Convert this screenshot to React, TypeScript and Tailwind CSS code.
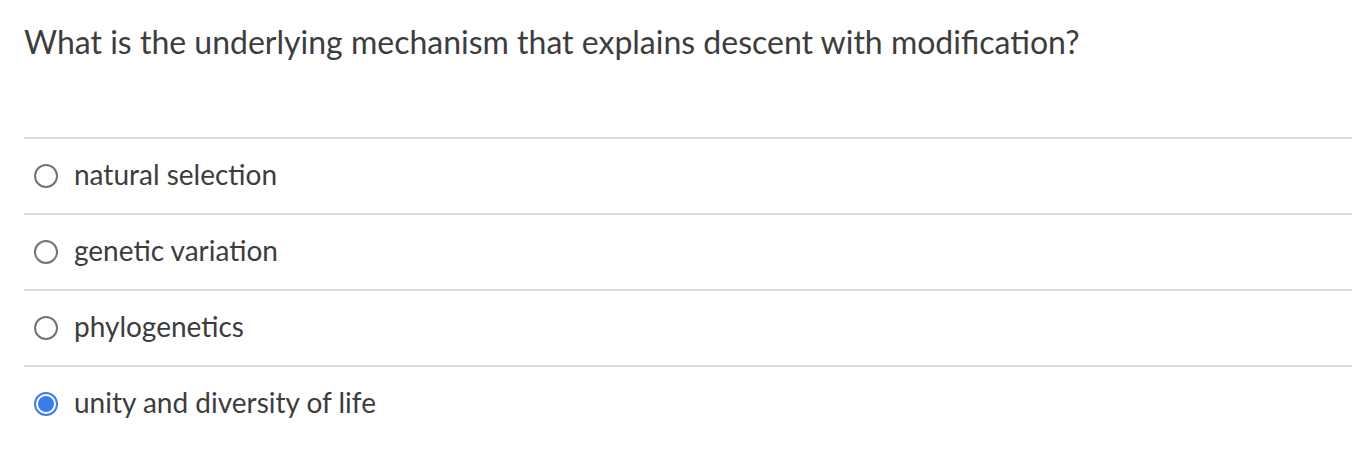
const options = [
  { label: 'natural selection', checked: false },
  { label: 'genetic variation', checked: false },
  { label: 'phylogenetics', checked: false },
  { label: 'unity and diversity of life', checked: true },
];

function Radio({ checked }: { checked: boolean }) {
  if (checked) {
    return (
      <span className="flex h-[24px] w-[24px] shrink-0 items-center justify-center rounded-full border-2 border-[#3b7cf0] bg-white">
        <span className="h-[16px] w-[16px] rounded-full bg-[#3b7cf0]" />
      </span>
    );
  }
  return <span className="h-[24px] w-[24px] shrink-0 rounded-full border-2 border-[#737373] bg-white" />;
}

export default function App() {
  return (
    <div className="h-[474px] w-[1352px] bg-white pl-[24px] font-['Lato','Open_Sans',sans-serif] text-[#3d3d3d]">
      <h1 className="pt-[22px] text-[32px] leading-[40px] font-normal">
        What is the underlying mechanism that explains descent with modification?
      </h1>
      <div className="mt-[75px] border-t-2 border-[#dcdcdc]">
        {options.map((opt, i) => (
          <label
            key={i}
            className={`flex items-center gap-[16px] pl-[10px] ${i < options.length - 1 ? 'h-[76px] border-b-2 border-[#dcdcdc]' : 'h-[74px]'}`}
          >
            <Radio checked={opt.checked} />
            <span className="pb-[4px] text-[28px] leading-[32px]">{opt.label}</span>
          </label>
        ))}
      </div>
    </div>
  );
}
